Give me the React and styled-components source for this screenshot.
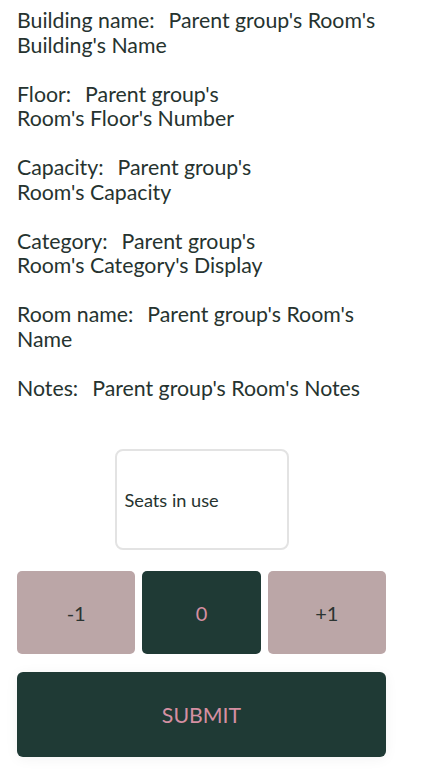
import React, { useState } from 'react';
import styled, { createGlobalStyle, css } from 'styled-components';

const GlobalStyle = createGlobalStyle`
  body {
    margin: 0;
    background: #ffffff;
    font-family: 'Lato', 'Noto Sans', sans-serif;
    color: #26332f;
  }
`;

const Page = styled.div`
  width: 369px;
  padding: 8px 17px 20px;
`;

const Details = styled.div`
  display: flex;
  flex-direction: column;
  gap: 24.5px;
`;

const Entry = styled.p`
  margin: 0;
  font-size: 21.3px;
  line-height: 24.5px;
`;

const Label = styled.span`
  margin-right: 14px;
`;

const SeatsBox = styled.div`
  box-sizing: border-box;
  width: 174px;
  height: 101px;
  margin: 49px auto 21px;
  border: 2px solid #e3e3e3;
  border-radius: 8px;
  display: flex;
  align-items: center;
  padding: 0 8px;
  font-size: 18.2px;
`;

const Counter = styled.div`
  display: grid;
  grid-template-columns: repeat(3, 1fr);
  gap: 7px;
`;

const CountButton = styled.button`
  height: 83px;
  border: none;
  border-radius: 5px;
  background: #bba6a7;
  color: #2b3432;
  font-family: inherit;
  font-size: 20px;
  cursor: pointer;
  ${(props) =>
    props.$current &&
    css`
      background: #1f3a35;
      color: #d58fa2;
    `}
`;

const SubmitButton = styled.button`
  display: block;
  width: 100%;
  height: 85px;
  margin-top: 18px;
  border: none;
  border-radius: 6px;
  background: #1f3a35;
  color: #d58fa2;
  font-family: inherit;
  font-size: 21.3px;
  box-shadow: 0 2px 14px rgba(0, 0, 0, 0.05);
  cursor: pointer;
`;

const rows = [
  ['Building name:', ["Parent group's Room's", "Building's Name"]],
  ['Floor:', ["Parent group's", "Room's Floor's Number"]],
  ['Capacity:', ["Parent group's", "Room's Capacity"]],
  ['Category:', ["Parent group's", "Room's Category's Display"]],
  ['Room name:', ["Parent group's Room's", 'Name']],
  ['Notes:', ["Parent group's Room's Notes"]],
];

const App = () => {
  const [count, setCount] = useState(0);
  return (
    <Page>
      <GlobalStyle />
      <Details>
        {rows.map(([label, lines]) => (
          <Entry key={label}>
            <Label>{label}</Label>
            {lines.map((line, i) => (
              <React.Fragment key={i}>
                {i > 0 && <br />}
                {line}
              </React.Fragment>
            ))}
          </Entry>
        ))}
      </Details>
      <SeatsBox>Seats in use</SeatsBox>
      <Counter>
        <CountButton onClick={() => setCount(count - 1)}>-1</CountButton>
        <CountButton $current>{count}</CountButton>
        <CountButton onClick={() => setCount(count + 1)}>+1</CountButton>
      </Counter>
      <SubmitButton>SUBMIT</SubmitButton>
    </Page>
  );
};

export default App;
